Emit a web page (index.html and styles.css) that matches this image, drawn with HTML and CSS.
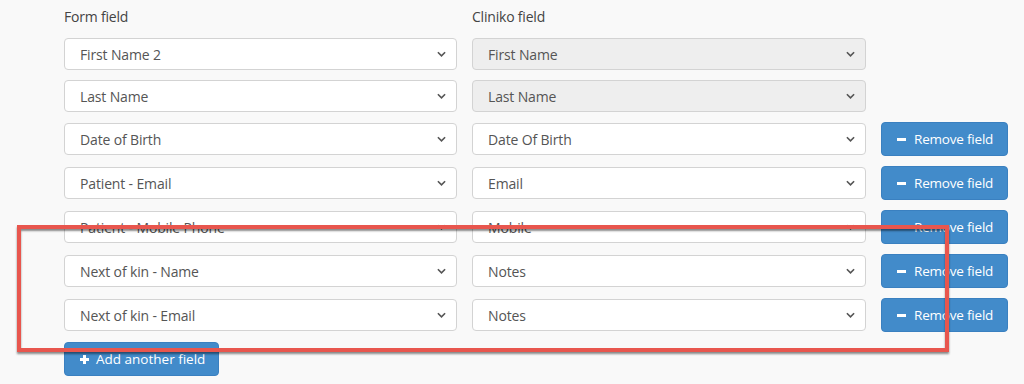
FILE: index.html
```html
<!DOCTYPE html>
<html>
<head>
<meta charset="utf-8">
<link rel="stylesheet" href="styles.css">
</head>
<body>
<div class="page">
  <div class="labels">
    <div class="label">Form field</div>
    <div class="label">Cliniko field</div>
  </div>
  <div class="rows">
    <div class="row">
      <div class="select"><span>First Name 2</span><svg class="chev" viewBox="0 0 10 6"><path d="M1 1l4 4 4-4" fill="none" stroke="#555" stroke-width="1.8"/></svg></div>
      <div class="select disabled"><span>First Name</span><svg class="chev" viewBox="0 0 10 6"><path d="M1 1l4 4 4-4" fill="none" stroke="#555" stroke-width="1.8"/></svg></div>
    </div>
    <div class="row">
      <div class="select"><span>Last Name</span><svg class="chev" viewBox="0 0 10 6"><path d="M1 1l4 4 4-4" fill="none" stroke="#555" stroke-width="1.8"/></svg></div>
      <div class="select disabled"><span>Last Name</span><svg class="chev" viewBox="0 0 10 6"><path d="M1 1l4 4 4-4" fill="none" stroke="#555" stroke-width="1.8"/></svg></div>
    </div>
    <div class="row">
      <div class="select"><span>Date of Birth</span><svg class="chev" viewBox="0 0 10 6"><path d="M1 1l4 4 4-4" fill="none" stroke="#555" stroke-width="1.8"/></svg></div>
      <div class="select"><span>Date Of Birth</span><svg class="chev" viewBox="0 0 10 6"><path d="M1 1l4 4 4-4" fill="none" stroke="#555" stroke-width="1.8"/></svg></div>
      <button class="btn"><span class="minus"></span>Remove field</button>
    </div>
    <div class="row">
      <div class="select"><span>Patient - Email</span><svg class="chev" viewBox="0 0 10 6"><path d="M1 1l4 4 4-4" fill="none" stroke="#555" stroke-width="1.8"/></svg></div>
      <div class="select"><span>Email</span><svg class="chev" viewBox="0 0 10 6"><path d="M1 1l4 4 4-4" fill="none" stroke="#555" stroke-width="1.8"/></svg></div>
      <button class="btn"><span class="minus"></span>Remove field</button>
    </div>
    <div class="row">
      <div class="select"><span>Patient - Mobile Phone</span><svg class="chev" viewBox="0 0 10 6"><path d="M1 1l4 4 4-4" fill="none" stroke="#555" stroke-width="1.8"/></svg></div>
      <div class="select"><span>Mobile</span><svg class="chev" viewBox="0 0 10 6"><path d="M1 1l4 4 4-4" fill="none" stroke="#555" stroke-width="1.8"/></svg></div>
      <button class="btn"><span class="minus"></span>Remove field</button>
    </div>
    <div class="row">
      <div class="select"><span>Next of kin - Name</span><svg class="chev" viewBox="0 0 10 6"><path d="M1 1l4 4 4-4" fill="none" stroke="#555" stroke-width="1.8"/></svg></div>
      <div class="select"><span>Notes</span><svg class="chev" viewBox="0 0 10 6"><path d="M1 1l4 4 4-4" fill="none" stroke="#555" stroke-width="1.8"/></svg></div>
      <button class="btn"><span class="minus"></span>Remove field</button>
    </div>
    <div class="row">
      <div class="select"><span>Next of kin - Email</span><svg class="chev" viewBox="0 0 10 6"><path d="M1 1l4 4 4-4" fill="none" stroke="#555" stroke-width="1.8"/></svg></div>
      <div class="select"><span>Notes</span><svg class="chev" viewBox="0 0 10 6"><path d="M1 1l4 4 4-4" fill="none" stroke="#555" stroke-width="1.8"/></svg></div>
      <button class="btn"><span class="minus"></span>Remove field</button>
    </div>
  </div>
  <div class="add-row">
    <button class="btn add"><span class="plus"></span>Add another field</button>
  </div>
  <div class="highlight"></div>
</div>
</body>
</html>
```

FILE: styles.css
```css
* { box-sizing: border-box; }
html, body { margin: 0; padding: 0; }
body {
  background: #f9f9f9;
  font-family: "Open Sans", "Liberation Sans", sans-serif;
  font-size: 14px;
  color: #555;
  width: 1024px;
  height: 384px;
  overflow: hidden;
}
.page {
  position: relative;
  padding: 7px 0 0 64px;
  height: 384px;
}
.labels {
  display: grid;
  grid-template-columns: 393px 394px;
  column-gap: 15px;
  height: 20px;
  line-height: 20px;
  margin-bottom: 11px;
}
.label { color: #444; font-size: 14px; letter-spacing: -0.2px; }
.rows {
  display: flex;
  flex-direction: column;
  gap: 10px;
}
.row {
  display: grid;
  grid-template-columns: 393px 394px 127px;
  column-gap: 15px;
  align-items: center;
}
.select {
  height: 32px;
  border: 1px solid #d3d3d3;
  border-radius: 4px;
  background: #fff;
  display: flex;
  align-items: center;
  justify-content: space-between;
  padding: 0 10px 0 15px;
  color: #555;
  letter-spacing: -0.15px;
  white-space: nowrap;
}
.select.disabled { background: #eeeeee; }
.chev { width: 9px; height: 6px; }
.btn {
  height: 34px;
  border: 1px solid #3a80c0;
  border-radius: 4px;
  background: #428bca;
  color: #fff;
  font-family: "Open Sans", "Liberation Sans", sans-serif;
  font-size: 13.5px;
  letter-spacing: -0.2px;
  white-space: nowrap;
  display: flex;
  align-items: center;
  justify-content: flex-start;
  padding: 0 0 0 15px;
  gap: 8px;
}
.minus {
  display: inline-block;
  width: 9px;
  height: 3px;
  background: #fff;
}
.plus {
  display: inline-block;
  width: 9px;
  height: 9px;
  background:
    linear-gradient(#fff, #fff) center / 9px 3px no-repeat,
    linear-gradient(#fff, #fff) center / 3px 9px no-repeat;
}
.add-row { margin-top: 10px; }
.btn.add { width: 155px; gap: 7px; padding-left: 15px; letter-spacing: 0; }
.highlight {
  position: absolute;
  left: 17px;
  top: 225px;
  width: 932px;
  height: 127px;
  border: 4px solid #e8564e;
  box-shadow: 0 2px 2px rgba(0,0,0,0.45), inset 0 2px 2px rgba(0,0,0,0.45);
}
```
